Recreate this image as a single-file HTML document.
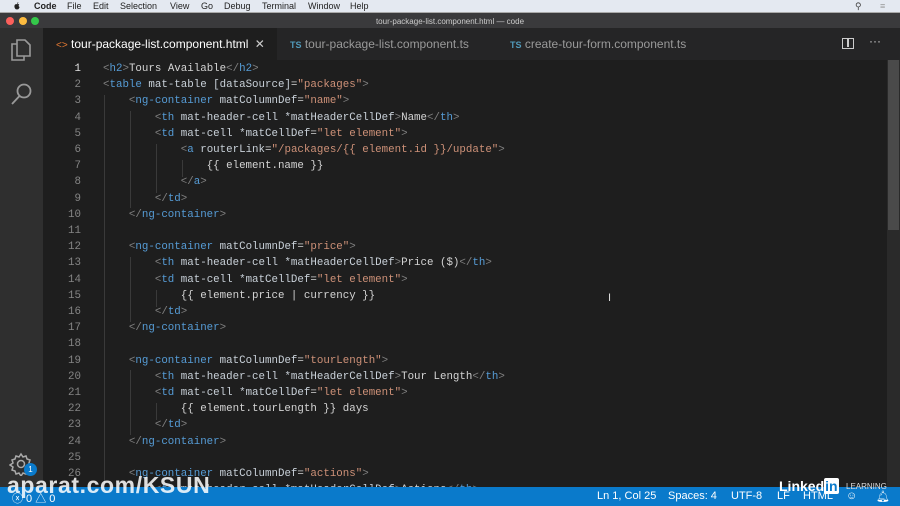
<!DOCTYPE html>
<html><head><meta charset="utf-8"><style>
*{margin:0;padding:0;box-sizing:border-box}
body{width:900px;height:506px;overflow:hidden;background:#1e1e1e;font-family:"Liberation Sans",sans-serif;position:relative}
#menu{position:absolute;left:0;top:0;width:900px;height:13px;background:#e4e9f1;font-size:9px;color:#222;border-bottom:1px solid #aaa}
#menu span{position:absolute;top:1px}
#title{position:absolute;left:0;top:13px;width:900px;height:17px;background:#3a3a3c;color:#ccc;font-size:8px;text-align:center;line-height:17px}
.dot{position:absolute;top:17px;width:8px;height:8px;border-radius:50%}
#act{position:absolute;left:0;top:28px;width:43px;height:459px;background:#2f2f2f}
#tabs{position:absolute;left:43px;top:28px;width:857px;height:32px;background:#252526}
.tab{position:absolute;top:0;height:32px;line-height:32px;font-size:12px;color:#9a9a9a}
.ln{position:absolute;left:43px;width:38px;text-align:right;font-family:"Liberation Mono",monospace;font-size:10.8px;color:#858585}
.cl{position:absolute;left:103px;font-family:"Liberation Mono",monospace;font-size:10.8px;color:#d4d4d4;white-space:pre}
.b{color:#808080}.t{color:#569cd6}.a{color:#c9d1d9}.s{color:#ce9178}
#sb{position:absolute;left:0;top:487px;width:900px;height:19px;background:#0a7acb;color:#fff;font-size:11px}
#sb span{position:absolute;top:3px}
.g{position:absolute;width:1px;background:#3a3a3a}
</style></head><body>
<div id="menu">
<svg style="position:absolute;left:13px;top:2px" width="8" height="9" viewBox="0 0 8 9"><path d="M4 2.3C4.6 1.9 5.5 1.9 6.3 2.5 5.4 3.2 5.5 4.6 6.6 5 6.2 6.3 5.4 7.6 4.6 7.4 4.2 7.3 3.8 7.3 3.4 7.4 2.5 7.6 1.4 5.8 1.4 4.3 1.4 2.5 2.8 1.8 4 2.3ZM4 1.9C4 1 4.7.4 5.3.3 5.4 1.1 4.7 1.9 4 1.9Z" fill="#222"/></svg>
<span style="left:34px;font-weight:bold">Code</span><span style="left:67px">File</span><span style="left:93px">Edit</span><span style="left:120px">Selection</span><span style="left:170px">View</span><span style="left:201px">Go</span><span style="left:224px">Debug</span><span style="left:262px">Terminal</span><span style="left:308px">Window</span><span style="left:350px">Help</span>
<span style="left:855px;color:#444">&#9906;</span><span style="left:880px;color:#999">&#8801;</span>
</div>
<div id="title">tour-package-list.component.html — code</div>
<div class="dot" style="left:6px;background:#fc605c"></div><div class="dot" style="left:19px;background:#fdbc40"></div><div class="dot" style="left:31px;background:#34c84a"></div>
<div id="act">
<svg style="position:absolute;left:10px;top:10px" width="22" height="24" viewBox="0 0 22 24" fill="none" stroke="#9a9a9a" stroke-width="1.6"><path d="M7 2h8l5 5v11H7z"/><path d="M7 6H2v16h12v-4"/></svg>
<svg style="position:absolute;left:10px;top:54px" width="24" height="24" viewBox="0 0 24 24" fill="none" stroke="#9a9a9a" stroke-width="1.8"><circle cx="14" cy="9" r="6.5"/><path d="M9.5 14L2 22"/></svg>
<svg style="position:absolute;left:9px;top:424px" width="24" height="24" viewBox="0 0 24 24" fill="none" stroke="#aaa" stroke-width="1.5"><circle cx="12" cy="12" r="3.5"/><path d="M12 2l2 3 3-1 1 3 3 1-1 3 3 2-3 2 1 3-3 1-1 3-3-1-2 3-2-3-3 1-1-3-3-1 1-3-3-2 3-2-1-3 3-1 1-3 3 1z"/></svg>
<div style="position:absolute;left:24px;top:435px;width:13px;height:13px;border-radius:50%;background:#0a7acb;color:#fff;font-size:8px;text-align:center;line-height:13px">1</div>
</div>
<div id="tabs">
<div class="tab" style="left:0;width:234px;background:#1e1e1e;color:#fff;padding-left:13px"><span style="color:#e37933;font-size:10px">&lt;&gt;</span> tour-package-list.component.html <span style="color:#ccc;margin-left:3px">✕</span></div>
<div class="tab" style="left:247px"><span style="color:#519aba;font-size:9px;font-weight:bold">TS</span> tour-package-list.component.ts</div>
<div class="tab" style="left:467px"><span style="color:#519aba;font-size:9px;font-weight:bold">TS</span> create-tour-form.component.ts</div>
<div style="position:absolute;left:799px;top:10px;width:12px;height:11px;border:1.5px solid #ccc"><div style="position:absolute;left:4px;top:0;width:1.5px;height:8px;background:#ccc"></div></div>
<div class="tab" style="left:826px;color:#ccc;font-size:12px;top:-3px">···</div>
</div>
<div style="position:absolute;left:887px;top:60px;width:13px;height:427px;background:#2a2a2a"></div>
<div style="position:absolute;left:888px;top:60px;width:11px;height:170px;background:#4a4a4a"></div>
<div style="position:absolute;left:0;top:4px">
<div class="g" style="left:104px;top:91px;height:390px"></div>
<div class="g" style="left:130px;top:107px;height:97px"></div>
<div class="g" style="left:156px;top:140px;height:49px"></div>
<div class="g" style="left:182px;top:156px;height:17px"></div>
<div class="g" style="left:130px;top:253px;height:65px"></div>
<div class="g" style="left:156px;top:286px;height:17px"></div>
<div class="g" style="left:130px;top:366px;height:65px"></div>
<div class="g" style="left:156px;top:399px;height:17px"></div>
<div class="ln" style="top:59px;color:#e0e0e0">1</div><div class="cl" style="top:59px"><span class="b">&lt;</span><span class="t">h2</span><span class="b">&gt;</span>Tours Available<span class="b">&lt;/</span><span class="t">h2</span><span class="b">&gt;</span></div>
<div class="ln" style="top:75.2px">2</div><div class="cl" style="top:75.2px"><span class="b">&lt;</span><span class="t">table</span> <span class="a">mat-table [dataSource]</span>=<span class="s">"packages"</span><span class="b">&gt;</span></div>
<div class="ln" style="top:91.4px">3</div><div class="cl" style="top:91.4px">    <span class="b">&lt;</span><span class="t">ng-container</span> <span class="a">matColumnDef</span>=<span class="s">"name"</span><span class="b">&gt;</span></div>
<div class="ln" style="top:107.6px">4</div><div class="cl" style="top:107.6px">        <span class="b">&lt;</span><span class="t">th</span> <span class="a">mat-header-cell *matHeaderCellDef</span><span class="b">&gt;</span>Name<span class="b">&lt;/</span><span class="t">th</span><span class="b">&gt;</span></div>
<div class="ln" style="top:123.8px">5</div><div class="cl" style="top:123.8px">        <span class="b">&lt;</span><span class="t">td</span> <span class="a">mat-cell *matCellDef</span>=<span class="s">"let element"</span><span class="b">&gt;</span></div>
<div class="ln" style="top:140px">6</div><div class="cl" style="top:140px">            <span class="b">&lt;</span><span class="t">a</span> <span class="a">routerLink</span>=<span class="s">"/packages/{{ element.id }}/update"</span><span class="b">&gt;</span></div>
<div class="ln" style="top:156.2px">7</div><div class="cl" style="top:156.2px">                {{ element.name }}</div>
<div class="ln" style="top:172.4px">8</div><div class="cl" style="top:172.4px">            <span class="b">&lt;/</span><span class="t">a</span><span class="b">&gt;</span></div>
<div class="ln" style="top:188.6px">9</div><div class="cl" style="top:188.6px">        <span class="b">&lt;/</span><span class="t">td</span><span class="b">&gt;</span></div>
<div class="ln" style="top:204.8px">10</div><div class="cl" style="top:204.8px">    <span class="b">&lt;/</span><span class="t">ng-container</span><span class="b">&gt;</span></div>
<div class="ln" style="top:221px">11</div>
<div class="ln" style="top:237.2px">12</div><div class="cl" style="top:237.2px">    <span class="b">&lt;</span><span class="t">ng-container</span> <span class="a">matColumnDef</span>=<span class="s">"price"</span><span class="b">&gt;</span></div>
<div class="ln" style="top:253.4px">13</div><div class="cl" style="top:253.4px">        <span class="b">&lt;</span><span class="t">th</span> <span class="a">mat-header-cell *matHeaderCellDef</span><span class="b">&gt;</span>Price ($)<span class="b">&lt;/</span><span class="t">th</span><span class="b">&gt;</span></div>
<div class="ln" style="top:269.6px">14</div><div class="cl" style="top:269.6px">        <span class="b">&lt;</span><span class="t">td</span> <span class="a">mat-cell *matCellDef</span>=<span class="s">"let element"</span><span class="b">&gt;</span></div>
<div class="ln" style="top:285.8px">15</div><div class="cl" style="top:285.8px">            {{ element.price | currency }}</div>
<div class="ln" style="top:302px">16</div><div class="cl" style="top:302px">        <span class="b">&lt;/</span><span class="t">td</span><span class="b">&gt;</span></div>
<div class="ln" style="top:318.2px">17</div><div class="cl" style="top:318.2px">    <span class="b">&lt;/</span><span class="t">ng-container</span><span class="b">&gt;</span></div>
<div class="ln" style="top:334.4px">18</div>
<div class="ln" style="top:350.6px">19</div><div class="cl" style="top:350.6px">    <span class="b">&lt;</span><span class="t">ng-container</span> <span class="a">matColumnDef</span>=<span class="s">"tourLength"</span><span class="b">&gt;</span></div>
<div class="ln" style="top:366.8px">20</div><div class="cl" style="top:366.8px">        <span class="b">&lt;</span><span class="t">th</span> <span class="a">mat-header-cell *matHeaderCellDef</span><span class="b">&gt;</span>Tour Length<span class="b">&lt;/</span><span class="t">th</span><span class="b">&gt;</span></div>
<div class="ln" style="top:383px">21</div><div class="cl" style="top:383px">        <span class="b">&lt;</span><span class="t">td</span> <span class="a">mat-cell *matCellDef</span>=<span class="s">"let element"</span><span class="b">&gt;</span></div>
<div class="ln" style="top:399.2px">22</div><div class="cl" style="top:399.2px">            {{ element.tourLength }} days</div>
<div class="ln" style="top:415.4px">23</div><div class="cl" style="top:415.4px">        <span class="b">&lt;/</span><span class="t">td</span><span class="b">&gt;</span></div>
<div class="ln" style="top:431.6px">24</div><div class="cl" style="top:431.6px">    <span class="b">&lt;/</span><span class="t">ng-container</span><span class="b">&gt;</span></div>
<div class="ln" style="top:447.8px">25</div>
<div class="ln" style="top:464px">26</div><div class="cl" style="top:464px">    <span class="b">&lt;</span><span class="t">ng-container</span> <span class="a">matColumnDef</span>=<span class="s">"actions"</span><span class="b">&gt;</span></div>
<div class="cl" style="top:480px">        <span class="b">&lt;</span><span class="t">th</span> <span class="a">mat-header-cell *matHeaderCellDef</span><span class="b">&gt;</span>Actions<span class="b">&lt;/</span><span class="t">th</span><span class="b">&gt;</span></div>
</div>
<div style="position:absolute;left:608px;top:292px;color:#ddd;font-size:11px">I</div>
<div id="sb">
<span style="left:12px">ⓧ 0 △ 0</span>
<span style="left:597px">Ln 1, Col 25</span><span style="left:668px">Spaces: 4</span><span style="left:731px">UTF-8</span><span style="left:777px">LF</span><span style="left:803px">HTML</span><span style="left:846px">☺</span><span style="left:876px">🔔︎</span>
</div>
<div style="position:absolute;left:7px;top:472px;color:rgba(255,255,255,0.85);font-size:23px;font-weight:bold;letter-spacing:0.6px">aparat.com/KSUN</div>
<div style="position:absolute;left:779px;top:478px;color:#fff;font-size:14px;font-weight:bold">Linked<span style="background:#fff;color:#0a7acb;padding:0 1px;border-radius:2px">in</span></div>
<div style="position:absolute;left:846px;top:482px;color:#ddd;font-size:8px">LEARNING</div>
</body></html>
